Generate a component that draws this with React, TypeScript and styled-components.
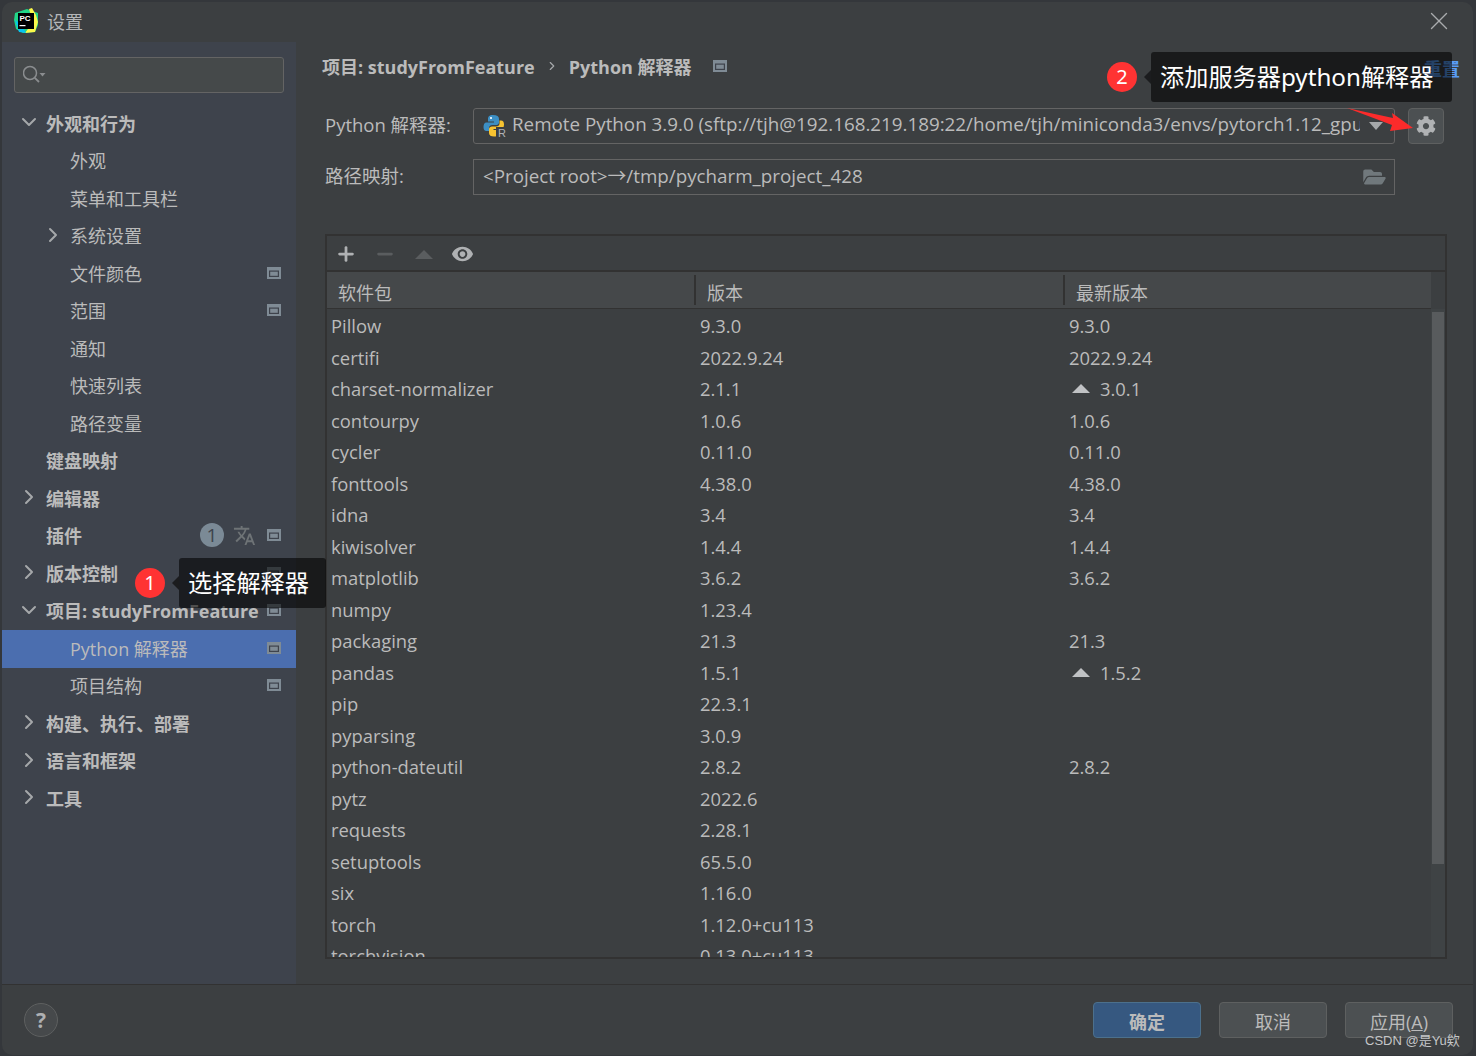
import styled, { createGlobalStyle } from "styled-components";
import { FaCog, FaFolderOpen } from "react-icons/fa";
import { MdTranslate, MdVisibility } from "react-icons/md";
import { FiChevronDown, FiChevronRight, FiPlus, FiMinus, FiX } from "react-icons/fi";

const FONT = `"Open Sans", "Noto Sans CJK SC", sans-serif`;

const GlobalStyle = createGlobalStyle`
  html, body { margin: 0; padding: 0; background: #34373b; }
  * { box-sizing: border-box; }
  #root { width: 1476px; height: 1056px; overflow: hidden; }
`;

const Page = styled.div`
  width: 1476px;
  height: 1056px;
  padding: 2px 3px 1px 2px;
  position: relative;
  font-family: ${FONT};
  font-size: 18.5px;
  color: #bbbbbb;
`;

const Dialog = styled.div`
  width: 100%;
  height: 100%;
  background: #3c3f41;
  border-radius: 10px;
  overflow: hidden;
  display: flex;
  flex-direction: column;
`;

const TitleBar = styled.div`
  height: 40px;
  flex: none;
  display: flex;
  align-items: center;
  padding: 0 19px 2px 11px;
  gap: 8px;
  color: #b4b6b8;
  font-size: 18px;
`;

const TitleText = styled.span`
  flex: 1;
`;

const CloseIcon = styled(FiX)`
  width: 30px;
  height: 30px;
  stroke-width: 1.1;
  color: #a9abad;
`;

const Body = styled.div`
  flex: 1;
  min-height: 0;
  display: flex;
`;

const Sidebar = styled.div`
  width: 294px;
  flex: none;
  background: #3e434c;
  padding: 15px 0 0;
`;

const SearchBox = styled.div`
  width: 270px;
  height: 36px;
  margin-left: 12px;
  display: flex;
  align-items: center;
  padding-left: 8px;
  background: #45494a;
  border: 1px solid #646464;
  border-radius: 3px;
  margin-bottom: 12px;
`;

const Tree = styled.div`
  display: flex;
  flex-direction: column;
`;

const TreeRow = styled.div<{ $level: number; $bold?: boolean; $selected?: boolean }>`
  height: 37.5px;
  display: flex;
  align-items: center;
  position: relative;
  padding-left: ${(p) => (p.$level === 0 ? 44 : 68)}px;
  padding-right: 15px;
  padding-bottom: 2px;
  font-weight: ${(p) => (p.$bold ? 700 : 400)};
  font-size: 18px;
  background: ${(p) => (p.$selected ? "#4b6eaf" : "transparent")};
  color: #bbbbbb;
`;

const Arrow = styled.span<{ $level: number }>`
  position: absolute;
  left: ${(p) => (p.$level === 0 ? 15 : 39)}px;
  top: 5px;
  display: flex;
  color: #a5a8aa;
`;

const RowLabel = styled.span`
  flex: 1;
  white-space: nowrap;
`;

const RowExtras = styled.div`
  display: flex;
  align-items: center;
`;

const CountBadge = styled.span`
  width: 24px;
  height: 24px;
  border-radius: 50%;
  background: #7b8a96;
  color: #3e434c;
  font-size: 19px;
  font-weight: 400;
  display: flex;
  align-items: center;
  justify-content: center;
  margin-right: 9px;
`;

const TranslateIcon = styled(MdTranslate)`
  width: 23px;
  height: 23px;
  color: #6e7376;
  margin-right: 11px;
`;

const Main = styled.div`
  flex: 1;
  min-width: 0;
  padding: 0 26px 25px 29px;
  display: flex;
  flex-direction: column;
`;

const Breadcrumb = styled.div`
  height: 48px;
  margin-left: -3px;
  display: flex;
  align-items: center;
  font-weight: 700;
  font-size: 18px;
  color: #bbbbbb;
  margin-bottom: 18px;
`;

const CrumbSep = styled(FiChevronRight)`
  width: 14px;
  height: 14px;
  margin: 0 10px;
  color: #a5a8aa;
`;

const CrumbIcon = styled.span`
  display: flex;
  margin-left: 21px;
`;

const FormRow = styled.div`
  display: flex;
  align-items: center;
  height: 36px;
  margin-bottom: 15px;
`;

const FormLabel = styled.label`
  width: 148px;
  flex: none;
  white-space: nowrap;
  margin-bottom: 4px;
`;

const Field = styled.div<{ $rounded?: boolean }>`
  width: 922px;
  height: 36px;
  flex: none;
  display: flex;
  align-items: center;
  border: 1px solid #646464;
  border-radius: ${(p) => (p.$rounded ? 3 : 0)}px;
  padding: 0 9px;
  gap: 5px;
`;

const FieldText = styled.span`
  flex: 1;
  min-width: 0;
  overflow: hidden;
  white-space: nowrap;
  font-size: 18.8px;
  margin-bottom: 4px;
`;

const DropCaret = styled.span`
  width: 0;
  height: 0;
  margin: 0 2px 0 4px;
  border-left: 7px solid transparent;
  border-right: 7px solid transparent;
  border-top: 8px solid #a5a8aa;
`;

const FolderIcon = styled(FaFolderOpen)`
  width: 23px;
  height: 20px;
  color: #70787c;
  margin-right: -1px;
`;

const GearButton = styled.button`
  width: 36px;
  height: 36px;
  margin-left: 13px;
  padding: 0;
  display: flex;
  align-items: center;
  justify-content: center;
  background: #4c5052;
  border: 1px solid #5e6060;
  border-radius: 4px;
  color: #b0b2b4;
`;

const GearIcon = styled(FaCog)`
  width: 20px;
  height: 20px;
`;

const TableFrame = styled.div`
  flex: 1;
  min-height: 0;
  margin-top: 24px;
  border: 2px solid #323232;
  display: flex;
  flex-direction: column;
  overflow: hidden;
`;

const Toolbar = styled.div`
  height: 36px;
  flex: none;
  display: flex;
  align-items: center;
  padding: 2px 0 0 7px;
  gap: 16px;
  border-bottom: 2px solid #323232;
`;

const ToolBtn = styled.span<{ $off?: boolean }>`
  width: 23px;
  display: flex;
  align-items: center;
  justify-content: center;
  font-size: 22px;
  color: ${(p) => (p.$off ? "#5a5d5f" : "#afb1b3")};
`;

const TriangleUp = styled.span<{ $color: string }>`
  width: 0;
  height: 0;
  border-left: 9px solid transparent;
  border-right: 9px solid transparent;
  border-bottom: 9px solid ${(p) => p.$color};
`;

const Columns = styled.div`
  display: grid;
  grid-template-columns: 369px 369px 1fr;
`;

const HeaderRow = styled(Columns)`
  height: 37px;
  flex: none;
  background: #45484a;
  border-bottom: 1px solid #323232;
  margin-right: 14px;
`;

const HeaderCell = styled.div`
  display: flex;
  align-items: center;
  padding: 3px 0 0 11px;
  font-size: 18px;
  border-right: 2px solid #323232;
  margin: 3px 0 3px;
  &:last-child { border-right: none; }
`;

const TableBody = styled.div`
  flex: 1;
  min-height: 0;
  position: relative;
  overflow: hidden;
  padding: 1px 14px 0 0;
`;

const DataRow = styled(Columns)`
  height: 31.5px;
  align-items: center;
  font-size: 18.4px;
`;

const Cell = styled.div`
  padding-left: 4px;
  display: flex;
  align-items: center;
  white-space: nowrap;
`;

const UpdateMark = styled.span`
  display: flex;
  margin: 0 10px 0 3px;
`;

const Scrollbar = styled.div`
  position: absolute;
  top: -37px;
  bottom: 0;
  right: 0;
  width: 14px;
  background: #3f4345;
`;

const ScrollThumb = styled.div`
  position: absolute;
  top: 40px;
  right: 1px;
  width: 12px;
  height: 552px;
  background: #585b5d;
`;

const Footer = styled.div`
  height: 71px;
  flex: none;
  display: flex;
  align-items: center;
  padding: 0 20px 0 22px;
  border-top: 1px solid #323232;
  gap: 18px;
`;

const HelpButton = styled.span`
  width: 34px;
  height: 34px;
  margin-right: auto;
  border-radius: 50%;
  background: #46494b;
  border: 1px solid #5e6060;
  display: flex;
  align-items: center;
  justify-content: center;
  font-weight: 700;
  font-size: 21px;
  color: #aeb0b2;
`;

const DialogButton = styled.button<{ $primary?: boolean }>`
  width: 108px;
  height: 36px;
  padding: 1px 0 0;
  font-family: ${FONT};
  font-size: 18px;
  font-weight: ${(p) => (p.$primary ? 700 : 400)};
  color: #bbbbbb;
  background: ${(p) => (p.$primary ? "#365880" : "#4c5052")};
  border: 1px solid ${(p) => (p.$primary ? "#4c708c" : "#5e6060")};
  border-radius: 4px;
`;

const Callout = styled.div<{ $left: number; $top: number; $width: number }>`
  position: absolute;
  left: ${(p) => p.$left}px;
  top: ${(p) => p.$top}px;
  width: ${(p) => p.$width}px;
  height: 50px;
  padding: 0 0 4px 9px;
  display: flex;
  align-items: center;
  background: rgba(0, 0, 0, 0.58);
  border-radius: 3px;
  color: #ffffff;
  font-family: "Noto Sans", "Noto Sans CJK SC", sans-serif;
  font-size: 24.2px;
  white-space: nowrap;
  &::before {
    content: "";
    position: absolute;
    left: -7px;
    top: 18px;
    border-top: 7px solid transparent;
    border-bottom: 7px solid transparent;
    border-right: 7px solid #1b1c1e;
  }
`;

const StepDot = styled.span<{ $left: number; $top: number }>`
  position: absolute;
  left: ${(p) => p.$left}px;
  top: ${(p) => p.$top}px;
  width: 30px;
  height: 30px;
  padding-bottom: 2px;
  border-radius: 50%;
  background: #ff3333;
  color: #ffffff;
  font-family: "Noto Sans", sans-serif;
  font-size: 20px;
  display: flex;
  align-items: center;
  justify-content: center;
`;

const ResetLink = styled.span`
  position: absolute;
  left: 1424px;
  top: 55px;
  color: #589df6;
  font-size: 18px;
  font-weight: 700;
`;

const ArrowOverlay = styled.svg`
  position: absolute;
  left: 1340px;
  top: 100px;
`;

const Watermark = styled.span`
  position: absolute;
  left: 1365px;
  top: 1030px;
  font-family: "Liberation Sans", "Noto Sans CJK SC", sans-serif;
  font-size: 13px;
  color: #c4c6c8;
`;

const SettingsMark = () => (
  <svg width="14" height="12" viewBox="0 0 14 12">
    <rect width="14" height="12" fill="#7f8b95" />
    <rect x="2" y="3.5" width="10" height="6.5" fill="#3e434c" />
    <rect x="3.2" y="4.7" width="7.6" height="4.1" fill="#7f8b95" />
  </svg>
);

const PyCharmLogo = () => (
  <svg width="26" height="26" viewBox="0 0 26 26">
    <polygon points="2,5 14,1 19,3 25,5 25,17 22,24 10,25 3,21 1,12" fill="#21d789" />
    <polygon points="16,1 19,0 23,7 25,14 22,24 12,25 20,14" fill="#fcf84a" />
    <polygon points="2,12 6,24 13,25 8,16" fill="#07c3f2" />
    <rect x="5" y="5" width="16" height="16" fill="#000000" />
    <text x="6.5" y="13" fontFamily="Liberation Sans" fontWeight="700" fontSize="8" fill="#ffffff">
      PC
    </text>
    <rect x="6.5" y="17" width="6" height="1.2" fill="#ffffff" />
  </svg>
);

const SearchGlyph = () => (
  <svg width="26" height="22" viewBox="0 0 26 22" fill="none">
    <circle cx="7" cy="9" r="6.5" stroke="#8a8d8f" strokeWidth="1.5" />
    <path d="M11.8 13.8 L16 18" stroke="#8a8d8f" strokeWidth="1.8" />
    <path d="M16.5 9 H22.5 L19.5 12.5 Z" fill="#8a8d8f" />
  </svg>
);

const PythonGlyph = () => (
  <svg width="24" height="24" viewBox="0 0 24 24">
    <path d="M10 1 C6 1 5 3 5 5 V7.5 H11 V8.5 H3.5 C1.5 8.5 0.5 10.5 0.5 13 C0.5 15.5 1.5 17 3.5 17 H6 V14 C6 12 7.5 11 9.5 11 H13.5 C15 11 16 10 16 8.5 V5 C16 2.5 14 1 10 1 Z" fill="#3c8fc4" />
    <path d="M11 22.5 C15 22.5 16.5 21 16.5 19 V16 H10.5 V15 H18 C20 15 21 13 21 10.5 C21 8 20 6.5 18 6.5 H16.5 V9.5 C16.5 11.5 15 12.5 13 12.5 H9 C7.5 12.5 6 13.5 6 15 V19 C6 21.5 8 22.5 11 22.5 Z" fill="#f7c331" />
    <circle cx="8" cy="4" r="1.1" fill="#ffffff" />
    <rect x="13" y="13" width="11" height="11" fill="#3c3f41" />
    <text x="15" y="23" fontFamily="Liberation Sans" fontSize="11" fill="#b0b2b4">
      R
    </text>
  </svg>
);

type Node = {
  label: string;
  level: number;
  bold?: boolean;
  open?: boolean;
  closed?: boolean;
  mark?: boolean;
  selected?: boolean;
  plugin?: boolean;
};

const nodes: Node[] = [
  { label: "外观和行为", level: 0, bold: true, open: true },
  { label: "外观", level: 1 },
  { label: "菜单和工具栏", level: 1 },
  { label: "系统设置", level: 1, closed: true },
  { label: "文件颜色", level: 1, mark: true },
  { label: "范围", level: 1, mark: true },
  { label: "通知", level: 1 },
  { label: "快速列表", level: 1 },
  { label: "路径变量", level: 1 },
  { label: "键盘映射", level: 0, bold: true },
  { label: "编辑器", level: 0, bold: true, closed: true },
  { label: "插件", level: 0, bold: true, mark: true, plugin: true },
  { label: "版本控制", level: 0, bold: true, closed: true, mark: true },
  { label: "项目: studyFromFeature", level: 0, bold: true, open: true, mark: true },
  { label: "Python 解释器", level: 1, mark: true, selected: true },
  { label: "项目结构", level: 1, mark: true },
  { label: "构建、执行、部署", level: 0, bold: true, closed: true },
  { label: "语言和框架", level: 0, bold: true, closed: true },
  { label: "工具", level: 0, bold: true, closed: true },
];

const packages: [string, string, string, boolean?][] = [
  ["Pillow", "9.3.0", "9.3.0"],
  ["certifi", "2022.9.24", "2022.9.24"],
  ["charset-normalizer", "2.1.1", "3.0.1", true],
  ["contourpy", "1.0.6", "1.0.6"],
  ["cycler", "0.11.0", "0.11.0"],
  ["fonttools", "4.38.0", "4.38.0"],
  ["idna", "3.4", "3.4"],
  ["kiwisolver", "1.4.4", "1.4.4"],
  ["matplotlib", "3.6.2", "3.6.2"],
  ["numpy", "1.23.4", ""],
  ["packaging", "21.3", "21.3"],
  ["pandas", "1.5.1", "1.5.2", true],
  ["pip", "22.3.1", ""],
  ["pyparsing", "3.0.9", ""],
  ["python-dateutil", "2.8.2", "2.8.2"],
  ["pytz", "2022.6", ""],
  ["requests", "2.28.1", ""],
  ["setuptools", "65.5.0", ""],
  ["six", "1.16.0", ""],
  ["torch", "1.12.0+cu113", ""],
  ["torchvision", "0.13.0+cu113", ""],
];

export default function App() {
  return (
    <Page>
      <GlobalStyle />
      <Dialog>
        <TitleBar>
          <PyCharmLogo />
          <TitleText>设置</TitleText>
          <CloseIcon />
        </TitleBar>
        <Body>
          <Sidebar>
            <SearchBox>
              <SearchGlyph />
            </SearchBox>
            <Tree>
              {nodes.map((n) => (
                <TreeRow key={n.label} $level={n.level} $bold={n.bold} $selected={n.selected}>
                  {n.open && (
                    <Arrow $level={n.level}>
                      <FiChevronDown size={24} />
                    </Arrow>
                  )}
                  {n.closed && (
                    <Arrow $level={n.level}>
                      <FiChevronRight size={24} />
                    </Arrow>
                  )}
                  <RowLabel>{n.label}</RowLabel>
                  <RowExtras>
                    {n.plugin && <CountBadge>1</CountBadge>}
                    {n.plugin && <TranslateIcon />}
                    {n.mark && <SettingsMark />}
                  </RowExtras>
                </TreeRow>
              ))}
            </Tree>
          </Sidebar>
          <Main>
            <Breadcrumb>
              项目: studyFromFeature
              <CrumbSep />
              Python 解释器
              <CrumbIcon>
                <SettingsMark />
              </CrumbIcon>
            </Breadcrumb>
            <FormRow>
              <FormLabel>Python 解释器:</FormLabel>
              <Field $rounded>
                <PythonGlyph />
                <FieldText>
                  Remote Python 3.9.0 (sftp://tjh@192.168.219.189:22/home/tjh/miniconda3/envs/pytorch1.12_gpu)
                </FieldText>
                <DropCaret />
              </Field>
              <GearButton>
                <GearIcon />
              </GearButton>
            </FormRow>
            <FormRow>
              <FormLabel>路径映射:</FormLabel>
              <Field>
                <FieldText>&lt;Project root&gt;→/tmp/pycharm_project_428</FieldText>
                <FolderIcon />
              </Field>
            </FormRow>
            <TableFrame>
              <Toolbar>
                <ToolBtn>
                  <FiPlus strokeWidth={3} />
                </ToolBtn>
                <ToolBtn $off>
                  <FiMinus strokeWidth={3} />
                </ToolBtn>
                <ToolBtn $off>
                  <TriangleUp $color="#5a5d5f" />
                </ToolBtn>
                <ToolBtn>
                  <MdVisibility size={24} />
                </ToolBtn>
              </Toolbar>
              <HeaderRow>
                <HeaderCell>软件包</HeaderCell>
                <HeaderCell>版本</HeaderCell>
                <HeaderCell>最新版本</HeaderCell>
              </HeaderRow>
              <TableBody>
                {packages.map(([name, version, latest, update]) => (
                  <DataRow key={name}>
                    <Cell>{name}</Cell>
                    <Cell>{version}</Cell>
                    <Cell>
                      {update && (
                        <UpdateMark>
                          <TriangleUp $color="#c0c2c4" />
                        </UpdateMark>
                      )}
                      {latest}
                    </Cell>
                  </DataRow>
                ))}
                <Scrollbar>
                  <ScrollThumb />
                </Scrollbar>
              </TableBody>
            </TableFrame>
          </Main>
        </Body>
        <Footer>
          <HelpButton>?</HelpButton>
          <DialogButton $primary>确定</DialogButton>
          <DialogButton>取消</DialogButton>
          <DialogButton>应用(<u>A</u>)</DialogButton>
        </Footer>
      </Dialog>
      <ResetLink>重置</ResetLink>
      <StepDot $left={135} $top={568}>1</StepDot>
      <Callout $left={179} $top={558} $width={147}>选择解释器</Callout>
      <StepDot $left={1107} $top={62}>2</StepDot>
      <Callout $left={1151} $top={52} $width={301}>添加服务器python解释器</Callout>
      <ArrowOverlay width="80" height="40" viewBox="0 0 80 40">
        <path d="M7 8 L53 18 L52 13 L73 28 L50 31 L52 25 Z" fill="#fc2b2b" />
      </ArrowOverlay>
      <Watermark>CSDN @是Yu欸</Watermark>
    </Page>
  );
}
